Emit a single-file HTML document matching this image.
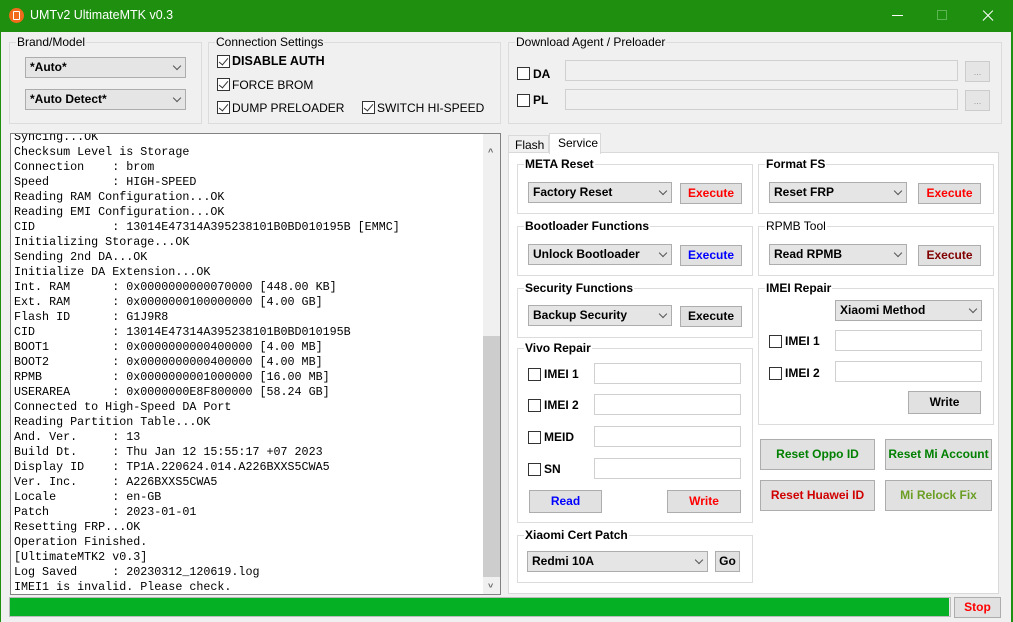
<!DOCTYPE html>
<html><head><meta charset="utf-8"><style>
*{box-sizing:border-box;margin:0;padding:0}
body{width:1013px;height:622px;background:#f0f0f0;position:relative;overflow:hidden;font-family:"Liberation Sans",Arial,sans-serif;font-size:12px;color:#000}
.a{position:absolute}
.title{left:0;top:0;width:1013px;height:32px;background:#1e8f0f}
.gb{position:absolute;border:1px solid #dcdcdc}
.gl{position:absolute;top:-8px;left:6px;padding:0 1px;background:#f0f0f0;font-size:12px;line-height:14px;white-space:nowrap}
.tp .gl{background:#fff}
.b{font-weight:bold}
.cb{position:absolute;width:16px;height:16px;background:#e5e5e5;border:1px solid #adadad;font-weight:bold;font-size:12px;line-height:19px;padding-left:4px;white-space:nowrap}
.cb:after{content:"";position:absolute;right:5px;top:5px;width:5px;height:5px;border-right:1px solid #555;border-bottom:1px solid #555;transform:rotate(45deg)}
.btn{position:absolute;background:#e1e1e1;border:1px solid #adadad;font-weight:bold;font-size:12px;text-align:center;white-space:nowrap}
.ck{position:absolute;width:13px;height:13px;border:1px solid #333;background:#fff}
.ck.on:after{content:"";position:absolute;left:3px;top:0px;width:4px;height:8px;border-right:1.5px solid #333;border-bottom:1.5px solid #333;transform:rotate(40deg)}
.lbl{position:absolute;white-space:nowrap;line-height:14px}
.in{position:absolute;background:#fff;border:1px solid #d0d0d0}
pre{font-family:"Liberation Mono","Courier New",monospace;font-size:11.7px;line-height:15px;position:absolute;left:3px;top:-4px}
</style></head><body>
<div class="a title"></div>
<div class="a" style="left:0;top:32px;width:1px;height:590px;background:#1e8f0f"></div>
<div class="a" style="left:1011px;top:32px;width:2px;height:590px;background:#1e8f0f"></div>
<div class="a" style="left:9px;top:8px;width:15px;height:15px;border-radius:50%;background:#f26a1b"></div>
<div class="a" style="left:13px;top:11px;width:7px;height:9px;border:1.5px solid #fff;border-radius:1px"></div>
<div class="a" style="left:30px;top:8px;color:#fff;font-size:12.5px">UMTv2 UltimateMTK v0.3</div>
<div class="a" style="left:892px;top:15px;width:11px;height:1px;background:#fff"></div>
<div class="a" style="left:937px;top:10px;width:10px;height:10px;border:1px solid #5cb552"></div>
<div class="a" style="left:981px;top:15px;width:14px;height:1.3px;background:#fff;transform:rotate(45deg)"></div>
<div class="a" style="left:981px;top:15px;width:14px;height:1.3px;background:#fff;transform:rotate(-45deg)"></div>

<div class="gb" style="left:9px;top:42px;width:193px;height:82px"><div class="gl">Brand/Model</div></div>
<div class="cb" style="left:25px;top:57px;width:161px;height:21px">*Auto*</div>
<div class="cb" style="left:25px;top:89px;width:161px;height:21px">*Auto Detect*</div>

<div class="gb" style="left:208px;top:42px;width:293px;height:82px"><div class="gl">Connection Settings</div></div>
<div class="ck on" style="left:217px;top:55px"></div><div class="lbl b" style="left:232px;top:54px;font-size:12.5px">DISABLE AUTH</div>
<div class="ck on" style="left:217px;top:78px"></div><div class="lbl" style="left:232px;top:78px">FORCE BROM</div>
<div class="ck on" style="left:217px;top:101px"></div><div class="lbl" style="left:232px;top:101px">DUMP PRELOADER</div>
<div class="ck on" style="left:362px;top:101px"></div><div class="lbl" style="left:377px;top:101px">SWITCH HI-SPEED</div>

<div class="gb" style="left:508px;top:42px;width:494px;height:82px"><div class="gl">Download Agent / Preloader</div></div>
<div class="ck" style="left:517px;top:67px"></div><div class="lbl b" style="left:533px;top:67px">DA</div>
<div class="ck" style="left:517px;top:94px"></div><div class="lbl b" style="left:533px;top:93px">PL</div>
<div class="in" style="left:565px;top:60px;width:393px;height:21px;background:#f0f0f0"></div>
<div class="in" style="left:565px;top:89px;width:393px;height:21px;background:#f0f0f0"></div>
<div class="btn" style="left:965px;top:61px;width:25px;height:21px;background:#e5e5e5;border-color:#ccc;color:#999;font-weight:normal;font-size:9px;line-height:20px">...</div>
<div class="btn" style="left:965px;top:90px;width:25px;height:21px;background:#e5e5e5;border-color:#ccc;color:#999;font-weight:normal;font-size:9px;line-height:20px">...</div>

<div class="a" style="left:10px;top:133px;width:491px;height:462px;background:#fff;border:1px solid #828282;overflow:hidden">
<pre>Syncing...OK
Checksum Level is Storage
Connection    : brom
Speed         : HIGH-SPEED
Reading RAM Configuration...OK
Reading EMI Configuration...OK
CID           : 13014E47314A395238101B0BD010195B [EMMC]
Initializing Storage...OK
Sending 2nd DA...OK
Initialize DA Extension...OK
Int. RAM      : 0x0000000000070000 [448.00 KB]
Ext. RAM      : 0x0000000100000000 [4.00 GB]
Flash ID      : G1J9R8
CID           : 13014E47314A395238101B0BD010195B
BOOT1         : 0x0000000000400000 [4.00 MB]
BOOT2         : 0x0000000000400000 [4.00 MB]
RPMB          : 0x0000000001000000 [16.00 MB]
USERAREA      : 0x0000000E8F800000 [58.24 GB]
Connected to High-Speed DA Port
Reading Partition Table...OK
And. Ver.     : 13
Build Dt.     : Thu Jan 12 15:55:17 +07 2023
Display ID    : TP1A.220624.014.A226BXXS5CWA5
Ver. Inc.     : A226BXXS5CWA5
Locale        : en-GB
Patch         : 2023-01-01
Resetting FRP...OK
Operation Finished.
[UltimateMTK2 v0.3]
Log Saved     : 20230312_120619.log
IMEI1 is invalid. Please check.</pre>
<div class="a" style="left:472px;top:0;width:17px;height:460px;background:#f0f0f0"></div>
<div class="a" style="left:472px;top:202px;width:17px;height:241px;background:#cdcdcd"></div>
<div class="a" style="left:477px;top:13px;color:#606060;font-size:9px;font-weight:bold">^</div>
<div class="a" style="left:477px;top:445px;color:#606060;font-size:9px;font-weight:bold;transform:rotate(180deg)">^</div>
</div>

<div class="a" style="left:508px;top:135px;width:41px;height:18px;border:1px solid #d9d9d9;border-bottom:none;background:#f0f0f0"></div>
<div class="lbl" style="left:515px;top:138px">Flash</div>
<div class="a tp" style="left:508px;top:152px;width:491px;height:442px;background:#fff;border:1px solid #d9d9d9"></div>
<div class="a" style="left:549px;top:133px;width:52px;height:21px;border:1px solid #d9d9d9;border-bottom:none;background:#fff"></div>
<div class="lbl" style="left:558px;top:136px">Service</div>

<div class="tp">
<div class="gb" style="left:517px;top:164px;width:236px;height:50px"><div class="gl b">META Reset</div></div>
<div class="cb" style="left:528px;top:182px;width:144px;height:21px">Factory Reset</div>
<div class="btn" style="left:680px;top:183px;width:62px;height:21px;color:#f00;line-height:19px">Execute</div>

<div class="gb" style="left:758px;top:164px;width:236px;height:50px"><div class="gl b">Format FS</div></div>
<div class="cb" style="left:769px;top:182px;width:138px;height:21px">Reset FRP</div>
<div class="btn" style="left:918px;top:183px;width:63px;height:21px;color:#f00;line-height:19px">Execute</div>

<div class="gb" style="left:517px;top:226px;width:236px;height:50px"><div class="gl b">Bootloader Functions</div></div>
<div class="cb" style="left:528px;top:244px;width:144px;height:21px">Unlock Bootloader</div>
<div class="btn" style="left:680px;top:245px;width:62px;height:21px;color:#00f;line-height:19px">Execute</div>

<div class="gb" style="left:758px;top:226px;width:236px;height:50px"><div class="gl">RPMB Tool</div></div>
<div class="cb" style="left:769px;top:244px;width:138px;height:21px">Read RPMB</div>
<div class="btn" style="left:918px;top:245px;width:63px;height:21px;color:#800000;line-height:19px">Execute</div>

<div class="gb" style="left:517px;top:288px;width:236px;height:50px"><div class="gl b">Security Functions</div></div>
<div class="cb" style="left:528px;top:305px;width:144px;height:21px">Backup Security</div>
<div class="btn" style="left:680px;top:306px;width:62px;height:21px;line-height:19px">Execute</div>

<div class="gb" style="left:758px;top:288px;width:236px;height:137px"><div class="gl b">IMEI Repair</div></div>
<div class="cb" style="left:835px;top:300px;width:147px;height:21px">Xiaomi Method</div>
<div class="ck" style="left:769px;top:335px"></div><div class="lbl b" style="left:785px;top:334px">IMEI 1</div>
<div class="in" style="left:835px;top:330px;width:147px;height:21px"></div>
<div class="ck" style="left:769px;top:367px"></div><div class="lbl b" style="left:785px;top:366px">IMEI 2</div>
<div class="in" style="left:835px;top:361px;width:147px;height:21px"></div>
<div class="btn" style="left:908px;top:391px;width:73px;height:23px;line-height:21px">Write</div>

<div class="gb" style="left:517px;top:348px;width:236px;height:175px"><div class="gl b">Vivo Repair</div></div>
<div class="ck" style="left:528px;top:368px"></div><div class="lbl b" style="left:544px;top:367px">IMEI 1</div>
<div class="in" style="left:594px;top:363px;width:147px;height:21px"></div>
<div class="ck" style="left:528px;top:399px"></div><div class="lbl b" style="left:544px;top:398px">IMEI 2</div>
<div class="in" style="left:594px;top:394px;width:147px;height:21px"></div>
<div class="ck" style="left:528px;top:431px"></div><div class="lbl b" style="left:544px;top:430px">MEID</div>
<div class="in" style="left:594px;top:426px;width:147px;height:21px"></div>
<div class="ck" style="left:528px;top:463px"></div><div class="lbl b" style="left:544px;top:462px">SN</div>
<div class="in" style="left:594px;top:458px;width:147px;height:21px"></div>
<div class="btn" style="left:529px;top:490px;width:73px;height:23px;line-height:21px;color:#00f">Read</div>
<div class="btn" style="left:667px;top:490px;width:74px;height:23px;line-height:21px;color:#f00">Write</div>

<div class="gb" style="left:517px;top:535px;width:236px;height:48px"><div class="gl b">Xiaomi Cert Patch</div></div>
<div class="cb" style="left:527px;top:551px;width:181px;height:21px">Redmi 10A</div>
<div class="btn" style="left:715px;top:551px;width:25px;height:21px;line-height:19px">Go</div>

<div class="btn" style="left:760px;top:439px;width:115px;height:31px;line-height:29px;color:#008000">Reset Oppo ID</div>
<div class="btn" style="left:885px;top:439px;width:107px;height:31px;line-height:29px;color:#008000">Reset Mi Account</div>
<div class="btn" style="left:760px;top:480px;width:115px;height:31px;line-height:29px;color:#d00000">Reset Huawei ID</div>
<div class="btn" style="left:885px;top:480px;width:107px;height:31px;line-height:29px;color:#6b9e23">Mi Relock Fix</div>
</div>

<div class="a" style="left:9px;top:597px;width:942px;height:20px;background:#e6e6e6;border:1px solid #bcbcbc"></div>
<div class="a" style="left:10px;top:598px;width:939px;height:18px;background:#06b025"></div>
<div class="btn" style="left:954px;top:597px;width:47px;height:21px;line-height:19px;color:#f00">Stop</div>
</body></html>
